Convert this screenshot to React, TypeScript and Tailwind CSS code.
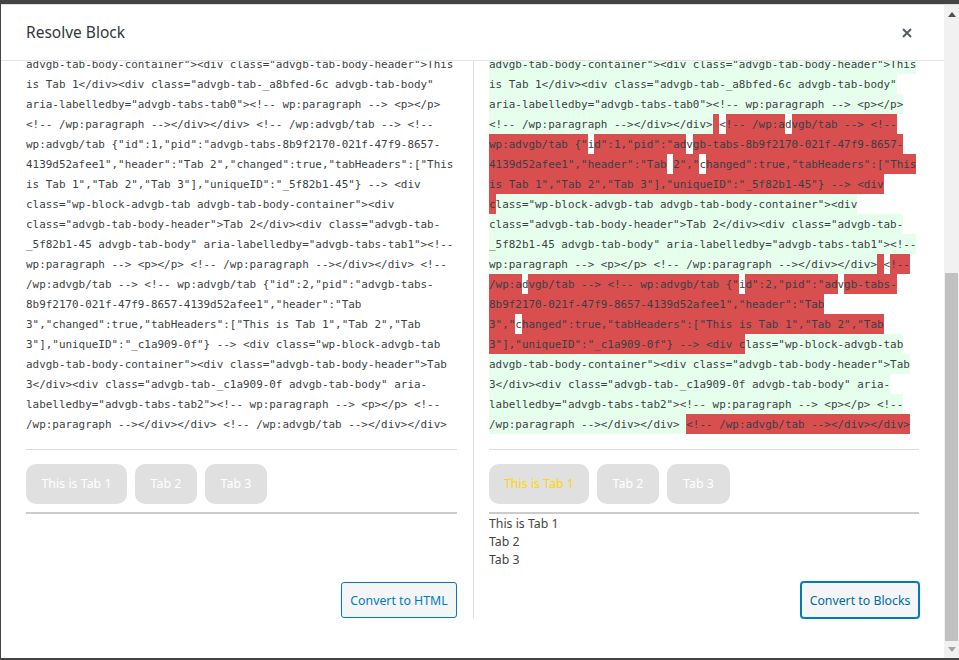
type Kind = "g" | "r" | "w";
type Seg = [string, Kind];

const leftLines = [
  'advgb-tab-body-container"><div class="advgb-tab-body-header">This',
  'is Tab 1</div><div class="advgb-tab-_a8bfed-6c advgb-tab-body"',
  'aria-labelledby="advgb-tabs-tab0"><!-- wp:paragraph --> <p></p>',
  "<!-- /wp:paragraph --></div></div> <!-- /wp:advgb/tab --> <!--",
  'wp:advgb/tab {"id":1,"pid":"advgb-tabs-8b9f2170-021f-47f9-8657-',
  '4139d52afee1","header":"Tab 2","changed":true,"tabHeaders":["This',
  'is Tab 1","Tab 2","Tab 3"],"uniqueID":"_5f82b1-45"} --> <div',
  'class="wp-block-advgb-tab advgb-tab-body-container"><div',
  'class="advgb-tab-body-header">Tab 2</div><div class="advgb-tab-',
  '_5f82b1-45 advgb-tab-body" aria-labelledby="advgb-tabs-tab1"><!--',
  "wp:paragraph --> <p></p> <!-- /wp:paragraph --></div></div> <!--",
  '/wp:advgb/tab --> <!-- wp:advgb/tab {"id":2,"pid":"advgb-tabs-',
  '8b9f2170-021f-47f9-8657-4139d52afee1","header":"Tab',
  '3","changed":true,"tabHeaders":["This is Tab 1","Tab 2","Tab',
  '3"],"uniqueID":"_c1a909-0f"} --> <div class="wp-block-advgb-tab',
  'advgb-tab-body-container"><div class="advgb-tab-body-header">Tab',
  '3</div><div class="advgb-tab-_c1a909-0f advgb-tab-body" aria-',
  'labelledby="advgb-tabs-tab2"><!-- wp:paragraph --> <p></p> <!--',
  "/wp:paragraph --></div></div> <!-- /wp:advgb/tab --></div></div>",
];

const rightLines: Seg[][] = [
  [['advgb-tab-body-container"><div class="advgb-tab-body-header">This', "g"]],
  [['is Tab 1</div><div class="advgb-tab-_a8bfed-6c advgb-tab-body"', "g"]],
  [['aria-labelledby="advgb-tabs-tab0"><!-- wp:paragraph --> <p></p>', "g"]],
  [
    ["<!-- /wp:paragraph --></div></div>", "g"],
    [" ", "r"],
    ["<", "w"],
    ["!-- /wp:a", "r"],
    ["d", "w"],
    ["vgb/tab --> <!--", "r"],
  ],
  [
    ['wp:advgb/tab {"', "r"],
    ["i", "w"],
    ['d":1,"pid":"ad', "r"],
    ["v", "w"],
    ["gb-tabs-8b9f2170-021f-47f9-8657-", "r"],
  ],
  [
    ['4139d52afee1","header":"Tab', "r"],
    [" ", "w"],
    ['2","', "r"],
    ["c", "w"],
    ['hanged":true,"tabHeaders":["This', "r"],
  ],
  [['is Tab 1","Tab 2","Tab 3"],"uniqueID":"_5f82b1-45"} --> <div', "r"]],
  [
    ["c", "r"],
    ['lass="wp-block-advgb-tab advgb-tab-body-container"><div', "g"],
  ],
  [['class="advgb-tab-body-header">Tab 2</div><div class="advgb-tab-', "g"]],
  [['_5f82b1-45 advgb-tab-body" aria-labelledby="advgb-tabs-tab1"><!--', "g"]],
  [
    ["wp:paragraph --> <p></p> <!-- /wp:paragraph --></div></div>", "g"],
    [" ", "r"],
    ["<", "w"],
    ["!--", "r"],
  ],
  [
    ["/wp:a", "r"],
    ["d", "w"],
    ['vgb/tab --> <!-- wp:advgb/tab {"', "r"],
    ["i", "w"],
    ['d":2,"pid":"ad', "r"],
    ["v", "w"],
    ["gb-tabs-", "r"],
  ],
  [['8b9f2170-021f-47f9-8657-4139d52afee1","header":"Tab', "r"]],
  [
    ['3","', "r"],
    ["c", "w"],
    ['hanged":true,"tabHeaders":["This is Tab 1","Tab 2","Tab', "r"],
  ],
  [
    ['3"],"uniqueID":"_c1a909-0f"} --> <div c', "r"],
    ['lass="wp-block-advgb-tab', "g"],
  ],
  [['advgb-tab-body-container"><div class="advgb-tab-body-header">Tab', "g"]],
  [['3</div><div class="advgb-tab-_c1a909-0f advgb-tab-body" aria-', "g"]],
  [['labelledby="advgb-tabs-tab2"><!-- wp:paragraph --> <p></p> <!--', "g"]],
  [
    ["/wp:paragraph --></div></div> ", "g"],
    ["<!-- /wp:advgb/tab --></div></div>", "r"],
  ],
];

const kindClass: Record<Kind, string> = {
  g: "bg-[#e6ffed]",
  r: "bg-[#d94f4f]",
  w: "bg-white",
};

const codeClass =
  "-mt-[7px] font-['DejaVu_Sans_Mono',monospace] text-[10.93px] leading-[18px] text-[#3a3f44] border-b border-[#dddddd] pb-[15px]";

const TabBar = ({ active }: { active?: boolean }) => (
  <div className="mt-[14px] border-b-2 border-[#cccccc] pb-2">
    <div className="flex gap-2 text-[12.4px] text-white">
      <div
        className={
          "flex h-10 items-center justify-center rounded-[10px] bg-[#e0e0e0] pt-px " +
          (active ? "w-[100px] text-[#ffd700]" : "w-[101px]")
        }
      >
        This is Tab 1
      </div>
      <div className="flex h-10 w-[62px] items-center justify-center rounded-[10px] bg-[#e0e0e0] pt-px">
        Tab 2
      </div>
      <div
        className={
          "flex h-10 items-center justify-center rounded-[10px] bg-[#e0e0e0] pt-px " +
          (active ? "w-[63px]" : "w-[62px]")
        }
      >
        Tab 3
      </div>
    </div>
  </div>
);

const Scrollbar = () => (
  <div className="flex w-[15px] shrink-0 flex-col bg-[#f1f1f1]">
    <div className="flex h-[16px] items-center justify-center">
      <svg width="8" height="5" viewBox="0 0 8 5" className="mt-[3px]">
        <path d="M4 0 8 5H0z" fill="#505050" />
      </svg>
    </div>
    <div className="mt-[252px] ml-px h-[368px] w-[13px] bg-[#c1c1c1]" />
    <div className="flex h-[17px] items-center justify-center">
      <svg width="8" height="5" viewBox="0 0 8 5">
        <path d="M0 0H8L4 5z" fill="#a3a3a3" />
      </svg>
    </div>
  </div>
);

export default function App() {
  return (
    <div className="flex h-[660px] w-[959px] flex-col overflow-hidden bg-[#444444] pt-[4px] pb-[2px] pl-px font-['Noto_Sans',sans-serif]">
      <div className="flex min-h-0 flex-1 border-t border-[#e0e0e0] bg-white">
        <div className="flex min-w-0 flex-1 flex-col">
          <header className="flex h-[56px] shrink-0 items-center justify-between border-b border-[#e2e4e7] pr-[32px] pl-[25px]">
            <h1 className="text-[15.5px] font-normal text-[#32373c]">Resolve Block</h1>
            <svg width="10" height="10" viewBox="0 0 10 10">
              <path d="M1 1 9 9M9 1 1 9" stroke="#555d66" strokeWidth="2" />
            </svg>
          </header>
          <div className="grid min-h-0 flex-1 grid-cols-[473px_1fr] pb-[40px]">
            <section className="flex min-h-0 flex-col border-r border-[#dddddd] pr-[16px] pl-[25px]">
              <div className="overflow-hidden">
                <div className={codeClass}>
                  {leftLines.map((line, i) => (
                    <div key={i} className="pt-[2px] whitespace-pre">
                      {line}
                    </div>
                  ))}
                </div>
              </div>
              <TabBar />
              <button className="mt-auto ml-auto h-9 w-[116px] rounded-[3px] border border-[#007cba] bg-[#f3f5f6] pt-[2px] text-[12.3px] text-[#007cba]">
                Convert to HTML
              </button>
            </section>
            <section className="flex min-h-0 flex-col pr-[25px] pl-[15px]">
              <div className="overflow-hidden">
                <div className={codeClass}>
                  {rightLines.map((line, i) => (
                    <div key={i} className="flex whitespace-pre">
                      {line.map(([text, kind], j) => (
                        <span key={j} className={"pt-[2px] " + kindClass[kind]}>
                          {text}
                        </span>
                      ))}
                    </div>
                  ))}
                </div>
              </div>
              <TabBar active />
              <div className="pt-px text-[12.3px] leading-[18px] text-[#444444]">
                <div>This is Tab 1</div>
                <div>Tab 2</div>
                <div>Tab 3</div>
              </div>
              <button className="mt-auto ml-auto h-9 w-[118px] rounded-[3px] border border-[#007cba] bg-[#f3f5f6] pt-[2px] text-[12.3px] text-[#006ba1] shadow-[0_0_0_1px_#007cba]">
                Convert to Blocks
              </button>
            </section>
          </div>
        </div>
        <Scrollbar />
      </div>
    </div>
  );
}
